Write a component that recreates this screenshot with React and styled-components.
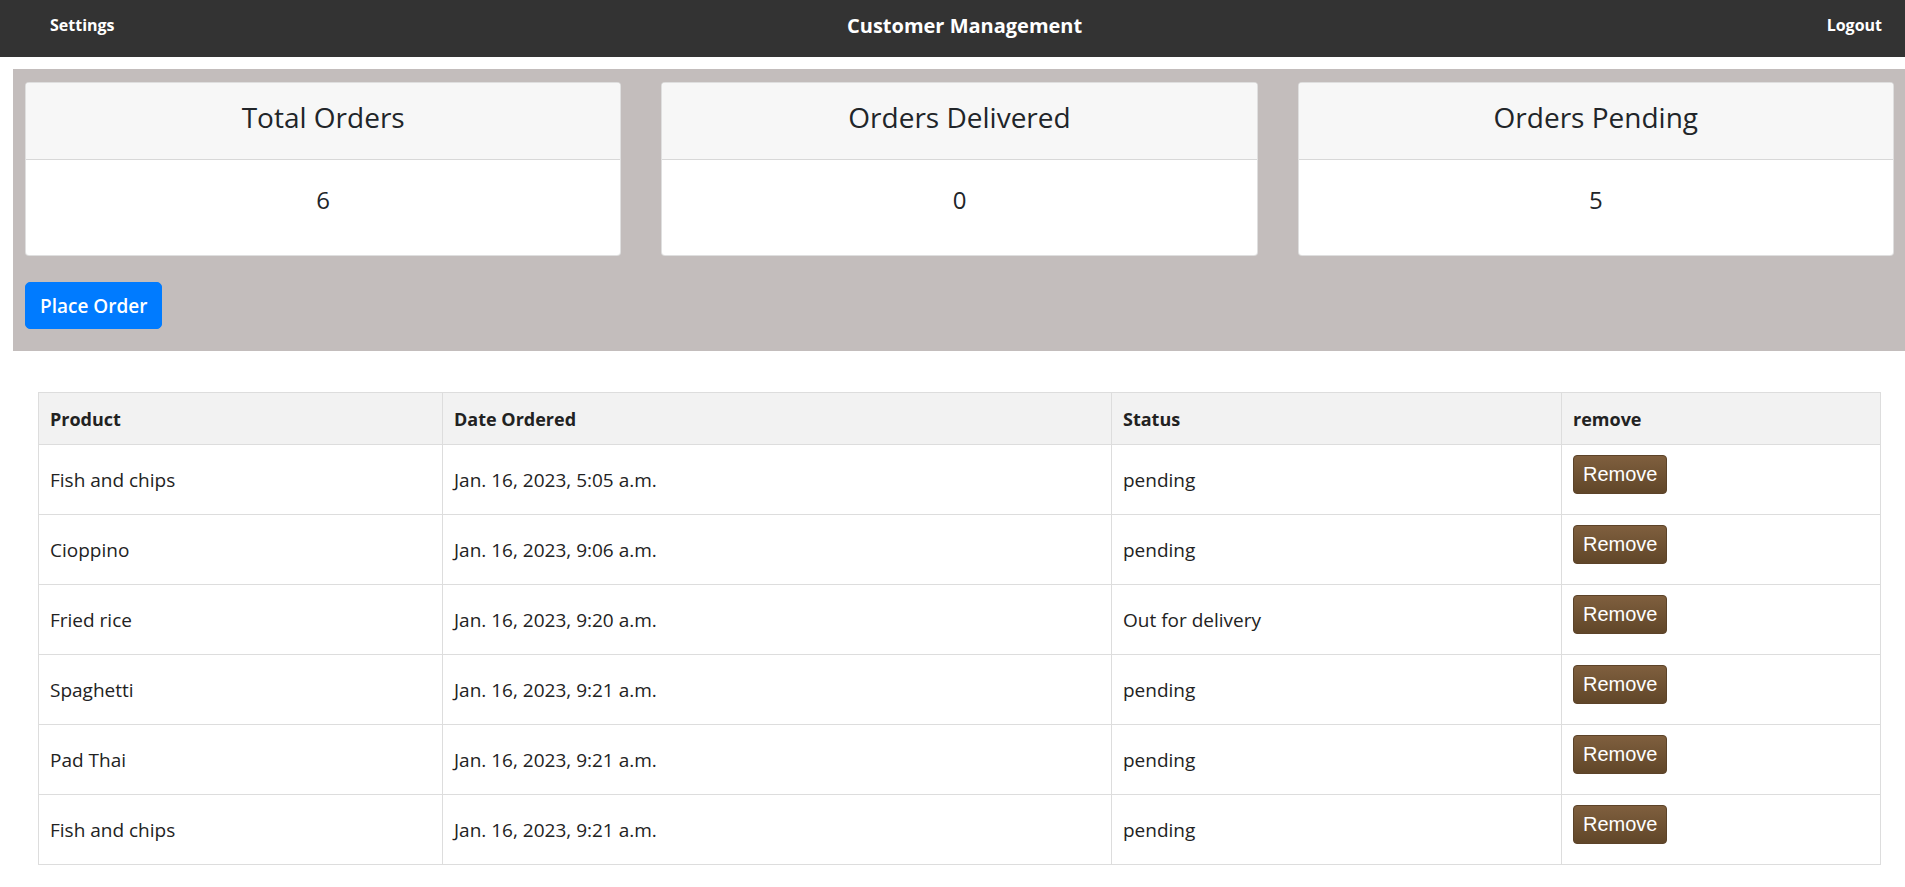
import styled, { createGlobalStyle } from 'styled-components';

const GlobalStyle = createGlobalStyle`
  html, body {
    margin: 0;
    padding: 0;
    background: #fff;
    font-family: "Open Sans", "Noto Sans", sans-serif;
    color: #212529;
    overflow-x: hidden;
  }
  * {
    box-sizing: border-box;
  }
`;

const NavBar = styled.nav`
  height: 57px;
  background: #333333;
  display: flex;
  align-items: center;
  justify-content: space-between;
  padding: 0 23px 7px 50px;
`;

const NavLink = styled.a`
  color: #fff;
  font-size: 16px;
  font-weight: 700;
  text-decoration: none;
  cursor: pointer;
`;

const NavTitle = styled.span`
  margin-right: 12px;
  color: #fff;
  font-size: 20px;
  font-weight: 700;
`;

const Dashboard = styled.section`
  margin: 12px 0 0 13px;
  background: #c3bdbc;
  padding: 13px 11px 22px 12px;
`;

const CardRow = styled.div`
  display: grid;
  grid-template-columns: repeat(3, 1fr);
  gap: 40px;
`;

const Card = styled.div`
  background: #fff;
  border: 1px solid rgba(0, 0, 0, 0.125);
  border-radius: 4px;
  overflow: hidden;
`;

const CardHeader = styled.div`
  height: 77px;
  background: #f7f7f7;
  border-bottom: 1px solid rgba(0, 0, 0, 0.125);
  display: flex;
  align-items: center;
  justify-content: center;
  padding-bottom: 6px;
`;

const CardTitle = styled.h3`
  margin: 0;
  font-size: 28px;
  font-weight: 400;
  line-height: 1.2;
`;

const CardBody = styled.div`
  height: 95px;
  display: flex;
  align-items: center;
  justify-content: center;
  padding-bottom: 15px;
`;

const CardValue = styled.h4`
  margin: 0;
  font-size: 24px;
  font-weight: 400;
  line-height: 1.2;
`;

const PrimaryButton = styled.button`
  margin-top: 26px;
  height: 47px;
  padding: 0 14px;
  background: #007bff;
  border: 1px solid #007bff;
  border-radius: 5px;
  color: #fff;
  font-family: inherit;
  font-size: 19px;
  font-weight: 600;
  cursor: pointer;
`;

const TableWrap = styled.div`
  padding: 41px 24px 24px 38px;
`;

const Table = styled.table`
  width: 100%;
  border-collapse: collapse;
  border: 1px solid #ddd;
  font-size: 19px;
`;

const HeadCell = styled.th`
  width: ${({ $w }) => $w};
  height: 52px;
  padding: 0 11px;
  background: #f2f2f2;
  border: 1px solid #ddd;
  text-align: left;
  font-weight: 700;
  font-size: 18px;
  color: #222;
`;

const Cell = styled.td`
  height: 70px;
  padding: ${({ $top }) => ($top ? '10px 11px 0' : '0 11px')};
  border: 1px solid #ddd;
  vertical-align: ${({ $top }) => ($top ? 'top' : 'middle')};
  color: #222;
`;

const RemoveButton = styled.button`
  padding: 7px 9px;
  font-family: "Liberation Sans", Arial, sans-serif;
  font-size: 20px;
  line-height: 23px;
  color: #fff;
  background: linear-gradient(#7f5f3e, #604629);
  border: 1px solid #5c4329;
  border-radius: 4px;
  cursor: pointer;
`;

const stats = [
  { title: 'Total Orders', value: 6 },
  { title: 'Orders Delivered', value: 0 },
  { title: 'Orders Pending', value: 5 },
];

const orders = [
  { product: 'Fish and chips', date: 'Jan. 16, 2023, 5:05 a.m.', status: 'pending' },
  { product: 'Cioppino', date: 'Jan. 16, 2023, 9:06 a.m.', status: 'pending' },
  { product: 'Fried rice', date: 'Jan. 16, 2023, 9:20 a.m.', status: 'Out for delivery' },
  { product: 'Spaghetti', date: 'Jan. 16, 2023, 9:21 a.m.', status: 'pending' },
  { product: 'Pad Thai', date: 'Jan. 16, 2023, 9:21 a.m.', status: 'pending' },
  { product: 'Fish and chips', date: 'Jan. 16, 2023, 9:21 a.m.', status: 'pending' },
];

export default function App() {
  return (
    <>
      <GlobalStyle />
      <NavBar>
        <NavLink>Settings</NavLink>
        <NavTitle>Customer Management</NavTitle>
        <NavLink>Logout</NavLink>
      </NavBar>

      <Dashboard>
        <CardRow>
          {stats.map((s) => (
            <Card key={s.title}>
              <CardHeader>
                <CardTitle>{s.title}</CardTitle>
              </CardHeader>
              <CardBody>
                <CardValue>{s.value}</CardValue>
              </CardBody>
            </Card>
          ))}
        </CardRow>
        <PrimaryButton>Place Order</PrimaryButton>
      </Dashboard>

      <TableWrap>
        <Table>
          <thead>
            <tr>
              <HeadCell $w="404px">Product</HeadCell>
              <HeadCell $w="669px">Date Ordered</HeadCell>
              <HeadCell $w="450px">Status</HeadCell>
              <HeadCell>remove</HeadCell>
            </tr>
          </thead>
          <tbody>
            {orders.map((o, i) => (
              <tr key={i}>
                <Cell>{o.product}</Cell>
                <Cell>{o.date}</Cell>
                <Cell>{o.status}</Cell>
                <Cell $top>
                  <RemoveButton>Remove</RemoveButton>
                </Cell>
              </tr>
            ))}
          </tbody>
        </Table>
      </TableWrap>
    </>
  );
}
